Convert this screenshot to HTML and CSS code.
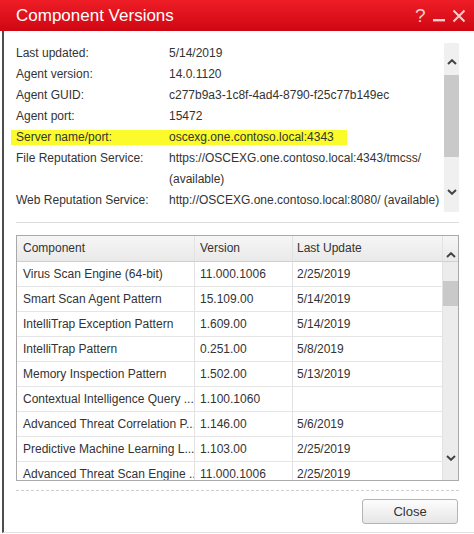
FILE: index.html
```html
<!DOCTYPE html>
<html>
<head>
<meta charset="utf-8">
<title>Component Versions</title>
<link rel="stylesheet" href="styles.css">
</head>
<body>
<div class="window">
  <div class="titlebar">
    <div class="title">Component Versions</div>
    <div class="controls">
      <span class="help">?</span>
      <svg class="ctl" width="13" height="18" viewBox="0 0 13 18"><rect x="0" y="12" width="12" height="2.4" fill="#f7cfcf"/></svg>
      <svg class="ctl" width="14" height="18" viewBox="0 0 14 18"><path d="M1.5 3.5 L12.5 14.5 M12.5 3.5 L1.5 14.5" stroke="#f7cfcf" stroke-width="2" fill="none"/></svg>
    </div>
  </div>
  <div class="frame">
    <div class="info">
      <div class="info-rows">
        <div class="row"><div class="label">Last updated:</div><div class="value">5/14/2019</div></div>
        <div class="row"><div class="label">Agent version:</div><div class="value">14.0.1120</div></div>
        <div class="row"><div class="label">Agent GUID:</div><div class="value">c277b9a3-1c8f-4ad4-8790-f25c77b149ec</div></div>
        <div class="row"><div class="label">Agent port:</div><div class="value">15472</div></div>
        <div class="row hl"><div class="label">Server name/port:</div><div class="value">oscexg.one.contoso.local:4343</div></div>
        <div class="row"><div class="label">File Reputation Service:</div><div class="value">https://OSCEXG.one.contoso.local:4343/tmcss/ (available)</div></div>
        <div class="row"><div class="label">Web Reputation Service:</div><div class="value">http://OSCEXG.one.contoso.local:8080/ (available)</div></div>
      </div>
      <div class="scroll info-scroll">
        <div class="arrow-up-zone"><svg width="10" height="6" viewBox="0 0 10 6"><polyline points="1,5 5,1.2 9,5" fill="none" stroke="#444" stroke-width="2"/></svg></div>
        <div class="thumb info-thumb"></div>
        <div class="arrow-down-zone"><svg width="10" height="6" viewBox="0 0 10 6"><polyline points="1,1 5,4.8 9,1" fill="none" stroke="#444" stroke-width="2"/></svg></div>
      </div>
    </div>
    <div class="sep"></div>
    <div class="table">
      <div class="grid">
        <div class="tr head"><div class="td">Component</div><div class="td">Version</div><div class="td">Last Update</div></div>
        <div class="tbody">
          <div class="tr"><div class="td">Virus Scan Engine (64-bit)</div><div class="td">11.000.1006</div><div class="td">2/25/2019</div></div>
          <div class="tr"><div class="td">Smart Scan Agent Pattern</div><div class="td">15.109.00</div><div class="td">5/14/2019</div></div>
          <div class="tr"><div class="td">IntelliTrap Exception Pattern</div><div class="td">1.609.00</div><div class="td">5/14/2019</div></div>
          <div class="tr"><div class="td">IntelliTrap Pattern</div><div class="td">0.251.00</div><div class="td">5/8/2019</div></div>
          <div class="tr"><div class="td">Memory Inspection Pattern</div><div class="td">1.502.00</div><div class="td">5/13/2019</div></div>
          <div class="tr"><div class="td">Contextual Intelligence Query ...</div><div class="td">1.100.1060</div><div class="td"></div></div>
          <div class="tr"><div class="td">Advanced Threat Correlation P...</div><div class="td">1.146.00</div><div class="td">5/6/2019</div></div>
          <div class="tr"><div class="td">Predictive Machine Learning L...</div><div class="td">1.103.00</div><div class="td">2/25/2019</div></div>
          <div class="tr"><div class="td">Advanced Threat Scan Engine ...</div><div class="td">11.000.1006</div><div class="td">2/25/2019</div></div>
        </div>
      </div>
      <div class="scroll table-scroll">
        <div class="ts-head"><svg width="10" height="6" viewBox="0 0 10 6"><polyline points="1,5 5,1.2 9,5" fill="none" stroke="#444" stroke-width="2"/></svg></div>
        <div class="ts-track">
          <div class="thumb table-thumb"></div>
          <div class="ts-down"><svg width="10" height="6" viewBox="0 0 10 6"><polyline points="1,1 5,4.8 9,1" fill="none" stroke="#444" stroke-width="2"/></svg></div>
        </div>
      </div>
    </div>
    <div class="dashed"></div>
    <div class="footer">
      <button class="btn">Close</button>
    </div>
  </div>
</div>
</body>
</html>
```

FILE: styles.css
```css
html, body {
  margin: 0;
  padding: 0;
  background: #ffffff;
}

body {
  font-family: "Liberation Sans", Arial, sans-serif;
  color: #333333;
}

.window {
  width: 474px;
  height: 534px;
  overflow: hidden;
}

.titlebar {
  height: 31px;
  background: linear-gradient(#ee1d26, #cf0713);
  display: flex;
  align-items: center;
  justify-content: space-between;
  padding: 0 8px 0 16px;
}

.title {
  color: #ffffff;
  font-size: 17px;
  padding-top: 1px;
}

.controls {
  display: flex;
  align-items: center;
  gap: 6px;
}

.help {
  color: #f7cfcf;
  font-size: 19px;
  line-height: 20px;
  width: 12px;
}

.ctl {
  display: block;
}

.frame {
  margin-left: 2px;
  border-left: 2px solid #4d4d4d;
  border-bottom: 1px solid #e2e2e2;
  height: 502px;
  box-sizing: border-box;
  padding: 12px 15px 0 12px;
  font-size: 12px;
}

.info {
  display: flex;
  height: 169px;
}

.info-rows {
  flex: 1;
  min-width: 0;
}

.row {
  display: flex;
  line-height: 21px;
}

.label {
  width: 153px;
  flex: none;
}

.value {
  flex: 1;
  min-width: 0;
}

.row.hl {
  background: #fbfb2c;
  width: 336px;
  box-sizing: border-box;
  margin: 3px 0 3px -5px;
  padding-left: 5px;
  line-height: 15px;
  height: 15px;
}

.scroll {
  flex: none;
  display: flex;
  flex-direction: column;
}

.info-scroll {
  width: 15px;
  background: #f0f0f0;
}

.arrow-up-zone {
  height: 32px;
  display: flex;
  align-items: center;
  justify-content: center;
  padding-top: 6px;
  box-sizing: border-box;
}

.info-thumb {
  height: 82px;
}

.thumb {
  background: #c9c9c9;
}

.arrow-down-zone {
  height: 55px;
  display: flex;
  justify-content: center;
  padding-top: 32px;
  box-sizing: border-box;
}

.arrow-down-zone svg,
.arrow-up-zone svg,
.ts-head svg,
.ts-down svg {
  display: block;
}

.sep {
  height: 1px;
  background: #dcdcdc;
  margin-top: 10px;
}

.table {
  margin-top: 12px;
  height: 246px;
  box-sizing: border-box;
  border: 1px solid #a9a9a9;
  display: flex;
  overflow: hidden;
}

.grid {
  width: 426px;
  flex: none;
}

.tr {
  display: grid;
  grid-template-columns: 178px 98px 150px;
  height: 25px;
  box-sizing: border-box;
  border-bottom: 1px solid #e5e5e5;
}

.tr.head {
  height: 26px;
  background: linear-gradient(#f6f6f6, #e9e9e9);
  border-bottom: 1px solid #d0d0d0;
}

.td {
  padding-left: 6px;
  line-height: 24px;
  border-right: 1px solid #e2e2e2;
  white-space: nowrap;
  overflow: hidden;
}

.tr .td:nth-child(2) {
  padding-left: 5px;
}

.tr .td:nth-child(3) {
  padding-left: 4px;
}

.tbody {
  height: 218px;
  overflow: hidden;
}

.table-scroll {
  width: 15px;
}

.ts-head {
  height: 26px;
  background: linear-gradient(#f6f6f6, #e9e9e9);
  border-bottom: 1px solid #d0d0d0;
  box-sizing: border-box;
  display: flex;
  justify-content: center;
  padding-top: 16px;
}

.ts-track {
  flex: 1;
  background: #ececec;
  display: flex;
  flex-direction: column;
}

.table-thumb {
  margin-top: 19px;
  height: 25px;
}

.ts-down {
  margin-top: auto;
  height: 25px;
  display: flex;
  justify-content: center;
}

.dashed {
  margin-top: 9px;
  border-top: 1px dashed #cfcfcf;
}

.footer {
  display: flex;
  justify-content: flex-end;
  margin-top: 8px;
  padding-right: 1px;
}

.btn {
  width: 96px;
  height: 25px;
  border: 1px solid #b4b4b4;
  border-radius: 3px;
  background: linear-gradient(#fdfdfd, #e6e6e6);
  font-family: "Liberation Sans", Arial, sans-serif;
  font-size: 13px;
  color: #333333;
  padding: 0;
}
```
